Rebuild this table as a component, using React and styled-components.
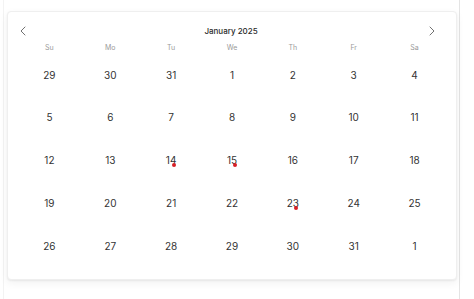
import React from "react";
import styled, { createGlobalStyle } from "styled-components";
import { ChevronLeft, ChevronRight } from "lucide-react";

const Global = createGlobalStyle`
  html, body { margin: 0; padding: 0; background: #fff; }
  body { font-family: Inter, "Noto Sans", sans-serif; }
`;

const Frame = styled.div`
  box-sizing: border-box;
  margin-left: 3px;
  width: 457px;
  height: 299px;
  border-left: 1px solid #f3f3f3;
  border-right: 1px solid #e4e4e4;
  padding: 11px 2px 0 3px;
`;

const Card = styled.div`
  box-sizing: border-box;
  width: 450px;
  height: 269px;
  background: #fff;
  border: 1px solid #efefef;
  border-radius: 4px;
  box-shadow: 0 1px 2px rgba(0, 0, 0, 0.06), 0 3px 8px rgba(0, 0, 0, 0.06);
  padding: 9px 11px 12px 11px;
  display: flex;
  flex-direction: column;
`;

const Header = styled.div`
  display: grid;
  grid-template-columns: 1fr auto 1fr;
  align-items: center;
  height: 20px;
  margin: 0 -2px 0 -4px;
`;

const NavButton = styled.button`
  border: none;
  background: none;
  padding: 0;
  width: 16px;
  height: 16px;
  display: flex;
  align-items: center;
  justify-content: center;
  color: #666;
  cursor: pointer;
  justify-self: ${(p) => (p.$end ? "end" : "start")};
  margin-right: ${(p) => (p.$end ? "7px" : "0")};
`;

const Title = styled.div`
  font-size: 8px;
  font-weight: 500;
  color: #2a2a2a;
`;

const WeekRow = styled.div`
  box-sizing: border-box;
  display: grid;
  grid-template-columns: repeat(7, 1fr);
  height: 13px;
  padding-top: 2px;
  align-items: center;
`;

const WeekDay = styled.div`
  text-align: center;
  font-size: 7px;
  line-height: 9px;
  color: #9a9a9a;
`;

const DaysGrid = styled.div`
  display: grid;
  grid-template-columns: repeat(7, 1fr);
  grid-auto-rows: 42.75px;
`;

const DayCell = styled.div`
  display: flex;
  align-items: center;
  justify-content: center;
`;

const DayNum = styled.span`
  position: relative;
  font-size: 10px;
  line-height: 12px;
  color: #333;
`;

const Dot = styled.span`
  position: absolute;
  width: 4px;
  height: 4px;
  border-radius: 50%;
  background: #d71f26;
  top: calc(100% - 3px);
  left: calc(50% + 1px);
`;

const weekdays = ["Su", "Mo", "Tu", "We", "Th", "Fr", "Sa"];
const days = [
  29, 30, 31, 1, 2, 3, 4,
  5, 6, 7, 8, 9, 10, 11,
  12, 13, 14, 15, 16, 17, 18,
  19, 20, 21, 22, 23, 24, 25,
  26, 27, 28, 29, 30, 31, 1,
];
const eventIdx = new Set([16, 17, 25]);

export default function App() {
  return (
    <>
      <Global />
      <Frame>
        <Card>
          <Header>
            <NavButton aria-label="Previous month">
              <ChevronLeft size={16} strokeWidth={1.4} />
            </NavButton>
            <Title>January 2025</Title>
            <NavButton $end aria-label="Next month">
              <ChevronRight size={16} strokeWidth={1.4} />
            </NavButton>
          </Header>
          <WeekRow>
            {weekdays.map((d) => (
              <WeekDay key={d}>{d}</WeekDay>
            ))}
          </WeekRow>
          <DaysGrid>
            {days.map((d, i) => (
              <DayCell key={i}>
                <DayNum>
                  {d}
                  {eventIdx.has(i) && <Dot />}
                </DayNum>
              </DayCell>
            ))}
          </DaysGrid>
        </Card>
      </Frame>
    </>
  );
}
